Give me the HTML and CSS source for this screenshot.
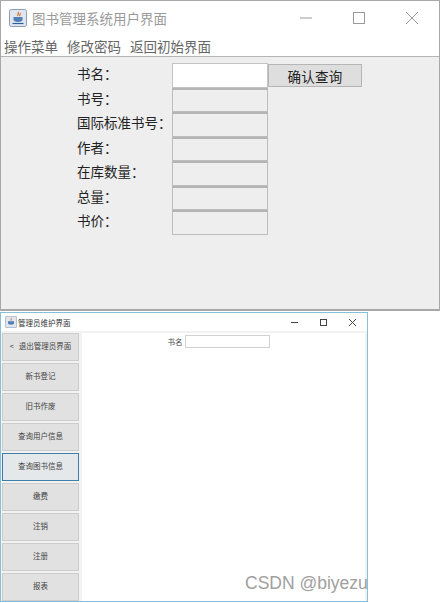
FILE: index.html
```html
<!DOCTYPE html>
<html lang="en">
<head>
    <meta charset="UTF-8">
    <title>图书管理系统</title>
    <link rel="stylesheet" href="styles.css">
</head>
<body>

    <!-- User window -->
    <div class="user-window">
        <div class="titlebar">
            <svg class="java-icon" width="18" height="18" viewBox="0 0 18 18">
                <rect x="0.5" y="0.5" width="17" height="17" rx="2" fill="#dfe6f0" stroke="#8d9db3"/>
                <path d="M9 3c1.5 1.5-1 2.500 0 4M11 4c1 1-1 2 0 3" fill="none" stroke="#d9722b" stroke-width="1.200"/>
                <path d="M4.500 8h9v2.500c0 1.500-1.500 2.500-4.500 2.500s-4.500-1-4.500-2.500z" fill="#4f7fb5"/>
                <path d="M3.500 14.500h11" stroke="#2f5f96" stroke-width="1.200"/>
            </svg>
            <span class="title">图书管理系统用户界面</span>
            <div class="win-buttons">
                <svg width="14" height="14" viewBox="0 0 14 14"><path d="M1 7h12" stroke="#9a9a9a" stroke-width="1"/></svg>
                <svg width="14" height="14" viewBox="0 0 14 14"><rect x="1.500" y="1.500" width="11" height="11" fill="none" stroke="#9a9a9a"/></svg>
                <svg width="14" height="14" viewBox="0 0 14 14"><path d="M1 1l12 12M13 1L1 13" stroke="#9a9a9a" stroke-width="1"/></svg>
            </div>
        </div>
        <div class="menubar">
            <a href="#">操作菜单</a>
            <a href="#">修改密码</a>
            <a href="#">返回初始界面</a>
        </div>
        <div class="content">
            <div class="form">
                <label>书名：</label>
                <input type="text" class="active-input">
                <button class="query-btn">确认查询</button>
                <label>书号：</label>
                <input type="text" disabled>
                <span></span>
                <label>国际标准书号：</label>
                <input type="text" disabled>
                <span></span>
                <label>作者：</label>
                <input type="text" disabled>
                <span></span>
                <label>在库数量：</label>
                <input type="text" disabled>
                <span></span>
                <label>总量：</label>
                <input type="text" disabled>
                <span></span>
                <label>书价：</label>
                <input type="text" disabled>
                <span></span>
            </div>
        </div>
    </div>

    <!-- Admin window -->
    <div class="admin-window">
        <div class="admin-titlebar">
            <svg width="12" height="12" viewBox="0 0 18 18">
                <rect x="0.500" y="0.500" width="17" height="17" rx="2" fill="#dfe6f0" stroke="#8d9db3"/>
                <path d="M9 3c1.500 1.500-1 2.500 0 4" fill="none" stroke="#d9722b" stroke-width="1.500"/>
                <path d="M4.500 8h9v2.500c0 1.500-1.500 2.500-4.500 2.500s-4.500-1-4.500-2.500z" fill="#4f7fb5"/>
            </svg>
            <span class="admin-title">管理员维护界面</span>
            <div class="admin-win-buttons">
                <svg width="9" height="9" viewBox="0 0 9 9"><path d="M1 4.500h7" stroke="#444"/></svg>
                <svg width="9" height="9" viewBox="0 0 9 9"><rect x="1.500" y="1.500" width="6" height="6" fill="none" stroke="#444"/></svg>
                <svg width="9" height="9" viewBox="0 0 9 9"><path d="M1 1l7 7M8 1L1 8" stroke="#444"/></svg>
            </div>
        </div>
        <div class="admin-body">
            <div class="sidebar">
                <button class="side-btn"><span class="back">&lt;</span>退出管理员界面</button>
                <button class="side-btn">新书登记</button>
                <button class="side-btn">旧书作废</button>
                <button class="side-btn">查询用户信息</button>
                <button class="side-btn focused">查询图书信息</button>
                <button class="side-btn">缴费</button>
                <button class="side-btn">注销</button>
                <button class="side-btn">注册</button>
                <button class="side-btn">报表</button>
            </div>
            <div class="admin-content">
                <div class="search-row">
                    <span>书名</span>
                    <input type="text" class="search-input">
                </div>
            </div>
        </div>
        <div class="watermark">CSDN @biyezu</div>
    </div>

</body>
</html>
```

FILE: styles.css
```css
/* General styles */
body {
    margin: 0;
    padding: 0;
    background-color: #ffffff;
    color: #333;
    font-family: "Noto Sans CJK SC", "Liberation Sans", sans-serif;
}
a {
    text-decoration: none;
}

/* User window */
.user-window {
    width: 440px;
    height: 311px;
    box-sizing: border-box;
    border: 1px solid #a8a8a8;
    border-bottom-width: 2px;
    display: flex;
    flex-direction: column;
}
.titlebar {
    height: 36px;
    box-sizing: border-box;
    padding: 0 0 3px 8px;
    display: flex;
    align-items: center;
    background-color: #ffffff;
}
.java-icon {
    margin-right: 5px;
}
.title {
    font-size: 13.500px;
    color: #9a9a9a;
}
.win-buttons {
    margin-left: auto;
    display: flex;
    gap: 39px;
    padding-right: 20px;
}
.menubar {
    height: 19px;
    box-sizing: content-box;
    display: flex;
    align-items: flex-start;
    gap: 9px;
    padding-left: 3px;
    background-color: #ffffff;
    border-bottom: 1px solid #b5b5b5;
}
.menubar a {
    font-size: 13.500px;
    line-height: 18px;
    color: #666;
}
.content {
    flex: 1;
    background-color: #eeeeee;
    padding: 6px 0 0 76px;
}

/* Form grid */
.form {
    display: grid;
    grid-template-columns: 95px 96px 94px;
    grid-auto-rows: 24.500px;
    font-size: 13.500px;
}
.form label {
    color: #222;
    line-height: 20.500px;
}
.form input {
    box-sizing: border-box;
    height: 100%;
    width: 100%;
    margin: 0;
    border: 1px solid #bdbdbd;
    border-top: 2px solid #b4b4b4;
    background-color: #eeeeee;
}
.form .active-input {
    background-color: #ffffff;
    border: 1px solid #c4c4c4;
}
.query-btn {
    height: 23px;
    margin-top: 1px;
    padding: 0;
    border: 1px solid #b5b5b5;
    background-color: #dedede;
    color: #222;
    font-family: inherit;
    font-size: 13.500px;
    letter-spacing: 0.200px;
}

/* Admin window */
.admin-window {
    position: relative;
    width: 368px;
    height: 290px;
    margin-top: 1px;
    box-sizing: border-box;
    border: 1px solid #86c0d6;
    display: flex;
    flex-direction: column;
    overflow: hidden;
}
.admin-titlebar {
    height: 18px;
    display: flex;
    align-items: center;
    padding-left: 4px;
    flex-shrink: 0;
}
.admin-title {
    font-size: 7.500px;
    color: #333;
    margin-left: 1px;
}
.admin-win-buttons {
    margin-left: auto;
    display: flex;
    gap: 20px;
    padding-right: 10px;
}
.admin-body {
    flex: 1;
    display: flex;
    background-color: #f2f2f2;
    padding: 2px 2px 0 1px;
    gap: 3px;
    min-height: 0;
}
.sidebar {
    width: 77px;
    display: flex;
    flex-direction: column;
    gap: 2px;
}
.side-btn {
    flex: 1;
    padding: 0 0 3px;
    border: 1px solid #cccccc;
    background-color: #e1e1e1;
    color: #444;
    font-family: inherit;
    font-size: 7.500px;
}
.side-btn.focused {
    border: 1px solid #3d7fa8;
    background-color: #e5e8ea;
}
.back {
    margin-right: 5px;
}
.admin-content {
    flex: 1;
    background-color: #ffffff;
}
.search-row {
    display: flex;
    align-items: center;
    justify-content: center;
    gap: 2px;
    padding: 2px 10px 0 0;
    font-size: 7.500px;
    color: #444;
}
.search-row .search-input {
    box-sizing: border-box;
    width: 85px;
    height: 13px;
    margin: 0;
    border: 1px solid #d2d2d2;
    background-color: #ffffff;
}
.watermark {
    position: absolute;
    left: 244px;
    top: 260px;
    font-family: "Liberation Sans", sans-serif;
    font-size: 17.500px;
    color: #a0a0a0;
    white-space: nowrap;
}
```
